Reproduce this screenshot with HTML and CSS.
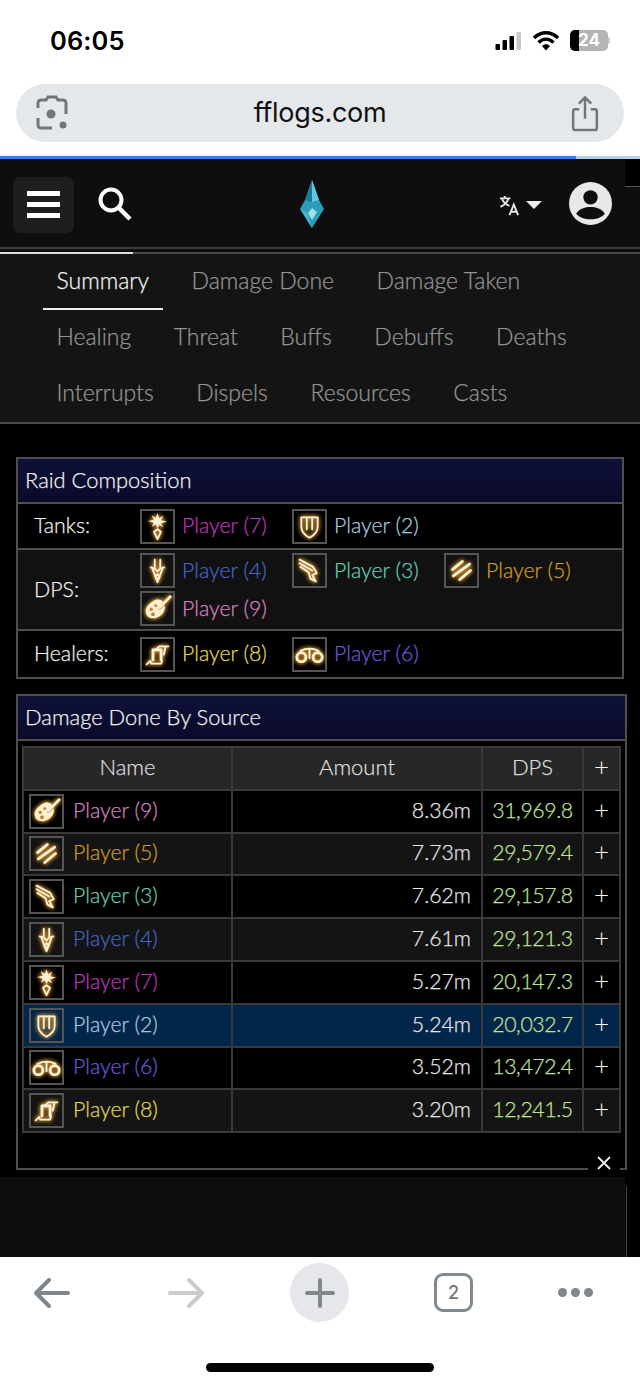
FILE: index.html
```html
<!DOCTYPE html>
<html lang="en">
<head>
<meta charset="utf-8">
<title>fflogs.com</title>
<link rel="stylesheet" href="styles.css">
</head>
<body>
<svg class="sprite" width="0" height="0" aria-hidden="true">
  <defs>
    <filter id="glow" x="-40%" y="-40%" width="180%" height="180%">
      <feGaussianBlur in="SourceAlpha" stdDeviation="2" result="b"/>
      <feFlood flood-color="#e09a2a"/>
      <feComposite in2="b" operator="in" result="c"/>
      <feMerge><feMergeNode in="c"/><feMergeNode in="c"/><feMergeNode in="SourceGraphic"/></feMerge>
    </filter>
    <symbol id="i-star" viewBox="0 0 32 32">
      <path class="gf" d="M16 1.500l1.800 5.500 4.700-3-2.700 5 6.700 1.500-6.700 1.800 2.700 4.700-4.700-3L16 18l-1.800-4.500-4.700 3 2.700-4.700-6.700-1.800 6.700-1.500-2.700-5 4.700 3z"/>
      <path class="gs" d="M16 19l3.800 2.800L16 30l-3.800-8.200z"/>
    </symbol>
    <symbol id="i-shield" viewBox="0 0 32 32">
      <path class="gs" d="M7 6h18v10.500c0 5-4.500 9.500-9 12-4.500-2.500-9-7-9-12z"/>
      <path class="gs" d="M13 6v13M19 6v13"/>
    </symbol>
    <symbol id="i-lance" viewBox="0 0 32 32">
      <path class="gs" d="M13 4v8M19 4v8M8.500 12.500l4.500 1.500 3 3 3-3 4.500-1.500"/>
      <path class="gs" d="M10.500 14l5.500 15 5.500-15M16 20l2.500 3-2.500 2.500-2.500-2.500z"/>
    </symbol>
    <symbol id="i-bow" viewBox="0 0 32 32">
      <path class="gs" d="M5 4l15 8M5 8l14 8M6 12l9 6"/>
      <path class="gs" d="M20 12l4 7-5 2 4 7-6-3-2-7"/>
    </symbol>
    <symbol id="i-stripes" viewBox="0 0 32 32">
      <path class="gs wide" d="M6 15L17 6M7 22L25 9M14 26L26 16"/>
    </symbol>
    <symbol id="i-palette" viewBox="0 0 32 32">
      <path class="gf" d="M11 8c4-3 10-2 11 1l-5 5-1 3 3 .5 5-5c1 6-3 12-10 14-7 1-11-2-11-8C3 14 7 11 11 8zm-2 7a2 2 0 1 0 .1 0zm5-4a1.800 1.800 0 1 0 .1 0zm-3 9a2.200 2.200 0 1 0 .1 0z" fill-rule="evenodd"/>
      <path class="gs wide" d="M18 15L30 3"/>
    </symbol>
    <symbol id="i-rune" viewBox="0 0 32 32">
      <path class="gs wide" d="M11 22V11h9v11"/>
      <path class="gs" d="M14 11l4-4h10M25 7l-2 9M4 27l4-4 1 3h11l1-3"/>
    </symbol>
    <symbol id="i-rings" viewBox="0 0 32 32">
      <path class="gs" d="M6 12c6-3 14-3 20 0M16 11v9"/>
      <circle class="gs wide" cx="7" cy="19" r="5"/>
      <circle class="gs wide" cx="25" cy="19" r="5"/>
    </symbol>
  </defs>
</svg>

<div class="status">
  <span class="clock">06:05</span>
  <div class="status-icons">
    <svg class="sig" viewBox="0 0 26 18"><rect x="0" y="12" width="4.500" height="6" rx="1"/><rect x="7" y="8" width="4.500" height="10" rx="1"/><rect x="14" y="4" width="4.500" height="14" rx="1"/><rect class="dim" x="21" y="0" width="4.500" height="18" rx="1"/></svg>
    <svg class="wifi" viewBox="0 0 26 20"><path d="M1 7c7-7 17-7 24 0M5.500 11.500c4.500-4.500 10.500-4.500 15 0" fill="none" stroke="#000" stroke-width="3.400"/><path d="M9 15c2.500-2.500 5.500-2.500 8 0l-4 4.500z"/></svg>
    <div class="batt"><span class="batt-fill"></span><span class="batt-num">24</span></div>
    <span class="batt-tip"></span>
  </div>
</div>

<div class="addr">
  <svg class="addr-ic" viewBox="0 0 32 36" fill="none" stroke="#70767b" stroke-width="3"><path d="M2 13V8a3 3 0 0 1 3-3h5l2-3h8l2 3h5a3 3 0 0 1 3 3v5"/><path d="M2 23v7a3 3 0 0 0 3 3h11M30 13v6"/><circle cx="15" cy="19" r="4.500" fill="#70767b" stroke="none"/><circle cx="27" cy="30" r="3.500" fill="#70767b" stroke="none"/></svg>
  <span class="url">fflogs.com</span>
  <svg class="addr-ic" viewBox="0 0 28 38" fill="none" stroke="#70767b" stroke-width="2.600"><path d="M8 14H3.500a2 2 0 0 0-2 2v18a2 2 0 0 0 2 2h21a2 2 0 0 0 2-2V16a2 2 0 0 0-2-2H20M14 24V2M7.500 8L14 1.500 20.500 8"/></svg>
</div>

<div class="progress"><span class="progress-done"></span></div>

<header class="site-head">
  <span class="hdr-corner"></span>
  <div class="burger"><span></span><span></span><span></span></div>
  <svg class="search" viewBox="0 0 34 34" fill="none" stroke="#fff"><circle cx="13" cy="13" r="10.500" stroke-width="4"/><path d="M20.500 20.500L32 32" stroke-width="4.500"/></svg>
  <svg class="crystal" viewBox="0 0 24 48"><path fill="#2b9dbb" d="M12 0l7 20 5 9-12 19L0 29l5-9z"/><path fill="#5fc8dc" d="M12 0v22l7-2z"/><path fill="#1a7a99" d="M12 0L5 20l7 2z"/><path fill="#9fe2ea" d="M12 28l5 4-5 8-4-7z"/><path fill="#42b4cd" d="M0 29l8 4 4 15z"/></svg>
  <div class="lang">
    <svg class="lang-ic" viewBox="0 0 22 22" fill="none" stroke="#e6e6e6" stroke-width="2"><path d="M1 3.500h11M6 1v2.500M3 3.500c1 3.500 4 6.500 8 8M10 3.500c-1 3.500-4 7-8.500 9M11 21l4.500-11 4.500 11M12.500 17.500h6"/></svg>
    <span class="caret"></span>
  </div>
  <svg class="avatar" viewBox="0 0 42 42"><circle cx="21" cy="21" r="21" fill="#e8e8e8"/><circle cx="21" cy="15" r="7" fill="#0e0e0e"/><path fill="#0e0e0e" d="M7 31c3-5 9-6.500 14-6.500S32 26 35 31c-3 3.500-8 5.500-14 5.500S10 34.500 7 31z"/></svg>
</header>
<div class="head-rule"><span class="head-rule-on"></span></div>

<nav class="tabs">
  <a class="tab active">Summary</a>
  <a class="tab">Damage Done</a>
  <a class="tab">Damage Taken</a>
  <a class="tab">Healing</a>
  <a class="tab">Threat</a>
  <a class="tab">Buffs</a>
  <a class="tab">Debuffs</a>
  <a class="tab">Deaths</a>
  <a class="tab">Interrupts</a>
  <a class="tab">Dispels</a>
  <a class="tab">Resources</a>
  <a class="tab">Casts</a>
</nav>

<main class="content">
  <section class="panel raid">
    <h2 class="panel-title">Raid Composition</h2>
    <div class="comp-row">
      <div class="comp-label">Tanks:</div>
      <div class="comp-list">
        <div class="member"><svg class="job"><use href="#i-star"/></svg><span class="c7">Player (7)</span></div>
        <div class="member"><svg class="job"><use href="#i-shield"/></svg><span class="c2">Player (2)</span></div>
      </div>
    </div>
    <div class="comp-row alt">
      <div class="comp-label">DPS:</div>
      <div class="comp-list">
        <div class="member"><svg class="job"><use href="#i-lance"/></svg><span class="c4">Player (4)</span></div>
        <div class="member"><svg class="job"><use href="#i-bow"/></svg><span class="c3">Player (3)</span></div>
        <div class="member"><svg class="job"><use href="#i-stripes"/></svg><span class="c5">Player (5)</span></div>
        <div class="member"><svg class="job"><use href="#i-palette"/></svg><span class="c9">Player (9)</span></div>
      </div>
    </div>
    <div class="comp-row">
      <div class="comp-label">Healers:</div>
      <div class="comp-list">
        <div class="member"><svg class="job"><use href="#i-rune"/></svg><span class="c8">Player (8)</span></div>
        <div class="member"><svg class="job"><use href="#i-rings"/></svg><span class="c6">Player (6)</span></div>
      </div>
    </div>
  </section>

  <section class="panel damage">
    <h2 class="panel-title">Damage Done By Source</h2>
    <table class="dmg">
      <colgroup><col class="col-name"><col class="col-amt"><col class="col-dps"><col class="col-add"></colgroup>
      <thead><tr><th>Name</th><th>Amount</th><th>DPS</th><th class="add">+</th></tr></thead>
      <tbody>
        <tr><td class="name"><div class="who"><svg class="job"><use href="#i-palette"/></svg><span class="c9">Player (9)</span></div></td><td class="amt">8.36m</td><td class="dps">31,969.8</td><td class="add">+</td></tr>
        <tr><td class="name"><div class="who"><svg class="job"><use href="#i-stripes"/></svg><span class="c5">Player (5)</span></div></td><td class="amt">7.73m</td><td class="dps">29,579.4</td><td class="add">+</td></tr>
        <tr><td class="name"><div class="who"><svg class="job"><use href="#i-bow"/></svg><span class="c3">Player (3)</span></div></td><td class="amt">7.62m</td><td class="dps">29,157.8</td><td class="add">+</td></tr>
        <tr><td class="name"><div class="who"><svg class="job"><use href="#i-lance"/></svg><span class="c4">Player (4)</span></div></td><td class="amt">7.61m</td><td class="dps">29,121.3</td><td class="add">+</td></tr>
        <tr><td class="name"><div class="who"><svg class="job"><use href="#i-star"/></svg><span class="c7">Player (7)</span></div></td><td class="amt">5.27m</td><td class="dps">20,147.3</td><td class="add">+</td></tr>
        <tr class="me"><td class="name"><div class="who"><svg class="job"><use href="#i-shield"/></svg><span class="c2">Player (2)</span></div></td><td class="amt">5.24m</td><td class="dps">20,032.7</td><td class="add">+</td></tr>
        <tr><td class="name"><div class="who"><svg class="job"><use href="#i-rings"/></svg><span class="c6">Player (6)</span></div></td><td class="amt">3.52m</td><td class="dps">13,472.4</td><td class="add">+</td></tr>
        <tr><td class="name"><div class="who"><svg class="job"><use href="#i-rune"/></svg><span class="c8">Player (8)</span></div></td><td class="amt">3.20m</td><td class="dps">12,241.5</td><td class="add">+</td></tr>
      </tbody>
    </table>
    <svg class="close" viewBox="0 0 32 14" fill="none" stroke="#eee" stroke-width="1.800"><path d="M10 1l12 12M22 1L10 13"/></svg>
  </section>
</main>

<div class="strip"><div class="strip-fill"></div><div class="strip-edge"></div></div>

<footer class="toolbar">
  <div class="tools">
    <svg class="arrow" viewBox="0 0 36 30" fill="none" stroke="#7f878c" stroke-width="4" stroke-linecap="round" stroke-linejoin="round"><path d="M34 15H3M15 2L2 15l13 13"/></svg>
    <svg class="arrow" viewBox="0 0 36 30" fill="none" stroke="#c9cbcc" stroke-width="4" stroke-linecap="round" stroke-linejoin="round"><path d="M2 15h31M21 2l13 13-13 13"/></svg>
    <div class="newtab"><svg viewBox="0 0 30 30" fill="none" stroke="#7f878c" stroke-width="4" stroke-linecap="round"><path d="M15 2v26M2 15h26"/></svg></div>
    <div class="tabcount">2</div>
    <div class="more"><span></span><span></span><span></span></div>
  </div>
  <div class="home"></div>
</footer>
</body>
</html>
```

FILE: styles.css
```css
* { box-sizing: border-box; }
html, body { margin: 0; padding: 0; }
body {
  width: 640px;
  height: 1385px;
  overflow: hidden;
  background: #000;
  color: #e8e8e8;
  font-family: Lato, "Open Sans", sans-serif;
  font-size: 21.300px;
  font-weight: 300;
  -webkit-text-stroke: .25px;
  display: flex;
  flex-direction: column;
}
.sprite { position: absolute; }

/* iOS status bar */
.status {
  height: 84px;
  background: #fff;
  color: #000;
  display: flex;
  align-items: flex-start;
  justify-content: space-between;
  padding: 26px 30px 0 50px;
  flex: none;
  -webkit-text-stroke: 0;
}
.clock { font: 600 25.500px/30px Inter, sans-serif; letter-spacing: .1px; }
.status-icons { display: flex; align-items: center; gap: 11px; padding-top: 4px; }
.sig { width: 27px; height: 18px; }
.sig .dim { fill: #c8c8c8; }
.wifi { width: 26px; height: 20px; }
.batt { position: relative; width: 38px; height: 21px; border-radius: 5px; background: #b5b5b5; overflow: hidden; }
.batt-fill { position: absolute; left: 0; top: 0; bottom: 0; width: 9px; background: #000; }
.batt-num { position: absolute; inset: 0; text-align: center; color: #fff; font: 700 17px/21px Inter, sans-serif; }
.batt-tip { width: 2px; height: 7px; margin-left: -11px; background: #c8c8c8; border-radius: 0 2px 2px 0; }

/* Address bar */
.addr {
  flex: none;
  position: relative;
  height: 72px;
  background: #fff;
  padding: 0 16px 14px;
  display: flex;
  -webkit-text-stroke: 0;
}
.url {
  position: absolute;
  left: 16px;
  right: 16px;
  top: 0;
  height: 58px;
  background: #e5e8eb;
  border-radius: 29px;
  text-align: center;
  font: 400 27px/58px Inter, "Liberation Sans", sans-serif;
  letter-spacing: -.3px;
  color: #111;
}
.addr-ic { position: relative; z-index: 1; width: 32px; height: 36px; margin-top: 11px; }
.addr-ic:first-child { margin-left: 20px; }
.addr-ic:last-child { margin-left: auto; margin-right: 25px; width: 28px; height: 36px; margin-top: 12px; }

.progress { flex: none; height: 3px; background: #b3d0ec; }
.progress-done { display: block; width: 576px; height: 3px; background: #2a86e0; }

/* Site header */
.site-head {
  flex: none;
  position: relative;
  height: 90px;
  background: #0e0e0e;
  display: flex;
  align-items: center;
  border-bottom: 2px solid #3c3c3c;
  padding: 0 28px 0 13px;
}
.hdr-corner {
  position: absolute;
  right: 0;
  top: 0;
  width: 15px;
  height: 28px;
  background: #000;
  border-bottom: 1px solid #555;
  box-shadow: 0 2px 0 #0e0e0e;
}
.burger {
  width: 61px;
  height: 56px;
  margin-top: 3px;
  background: #1e1e1e;
  border-radius: 7px;
  display: flex;
  flex-direction: column;
  justify-content: center;
  align-items: center;
  gap: 6.500px;
}
.burger span { display: block; width: 33px; height: 4.500px; background: #fff; }
.search { width: 34px; height: 34px; margin-left: 24px; margin-top: 2px; }
.crystal { width: 24px; height: 48px; margin-left: 168px; margin-top: 2px; }
.lang { display: flex; align-items: center; gap: 6px; margin-left: auto; }
.lang-ic { width: 21px; height: 21px; margin-top: 5px; }
.caret { width: 0; height: 0; border-left: 8px solid transparent; border-right: 8px solid transparent; border-top: 8px solid #eee; margin-top: 4px; }
.avatar { width: 43px; height: 43px; margin-left: 27px; margin-top: 0; }

.head-rule { flex: none; height: 5px; background: #0e0e0e; border-bottom: 2px solid #4a4a4a; position: relative; }
.head-rule-on { position: absolute; left: 0; top: 3px; width: 133px; height: 2px; background: #ddd; }

/* Tabs */
.tabs {
  flex: none;
  height: 170px;
  background: #141414;
  border-bottom: 2px solid #4c4c4c;
  padding: 0 43px;
  display: flex;
  flex-wrap: wrap;
  align-content: flex-start;
  gap: 0 15.500px;
}
.tab {
  height: 56px;
  padding: 0 13.500px;
  line-height: 52px;
  color: #949494;
  font-size: 23px;
  white-space: nowrap;
}
.tab.active { color: #f4f4f4; border-bottom: 2px solid #eee; }

/* Panels */
.content { flex: none; height: 753px; padding: 33px 0 0 16px; background: #000; }
.panel { border: 2px solid #4e4e4e; background: #000; }
.panel.raid { width: 608px; }
.panel.damage { position: relative; width: 611px; height: 476px; margin-top: 15px; }
.panel-title {
  margin: 0;
  height: 45px;
  padding-left: 7px;
  font-size: 21.900px;
  font-weight: 300;
  line-height: 42px;
  color: #f0f0f0;
  background: linear-gradient(#0e1038, #0a0b2a);
  border-bottom: 2px solid #4e4e4e;
}

.comp-row {
  display: flex;
  align-items: center;
  border-bottom: 2px solid #4e4e4e;
  min-height: 46px;
}
.comp-row:last-child { border-bottom: 0; }
.comp-row.alt { background: #111; }
.comp-label { width: 122px; padding-left: 16px; flex: none; color: #eee; margin-top: -2px; }
.comp-list { display: flex; flex-wrap: wrap; gap: 3px 0; padding: 3px 0; }
.member { width: 152px; display: flex; align-items: center; gap: 7px; white-space: nowrap; }
.member span { margin-top: -2px; }

.job {
  flex: none;
  width: 35px;
  height: 35px;
  border: 2px solid #555;
  padding: 1px;
  overflow: visible;
}
.job use { filter: url(#glow); }
.gf { fill: #fff2d2; stroke: none; }
.gs { fill: none; stroke: #fff2d2; stroke-width: 2; stroke-linejoin: round; stroke-linecap: round; }
.gs.wide { stroke-width: 3; }

.c2 { color: #a8cadf; }
.c3 { color: #66cbb4; }
.c4 { color: #4465c2; }
.c5 { color: #d09c20; }
.c6 { color: #7154dc; }
.c7 { color: #c233bd; }
.c8 { color: #e0d852; }
.c9 { color: #d682c2; }

/* Damage table */
.dmg {
  width: 597px;
  margin: 5px 0 0 4px;
  table-layout: fixed;
  border-collapse: collapse;
  border: 2px solid #3a3a3a;
}
.col-name { width: 209px; }
.col-amt { width: 250px; }
.col-dps { width: 101px; }
.col-add { width: 37px; }
.dmg th, .dmg td { height: 42.800px; padding: 0 0 3px; border: 2px solid #3a3a3a; font-weight: 300; }
.dmg th { background: #272727; color: #ddd; text-align: center; font-size: 22px; }
.dmg tbody tr:nth-child(even) td { background: #141414; }
.dmg tbody tr.me td { background: #02264a; }
.dmg td.name { padding-bottom: 0; }
.who { display: flex; align-items: center; gap: 9px; padding-left: 5px; }
.who span { margin-top: -3px; }
.who .job { width: 35px; height: 35px; }
.dmg td.amt { text-align: right; padding-right: 10px; color: #e6e6e6; }
.dps { text-align: center; color: #bfe292; letter-spacing: -.4px; }
.dmg .add { text-align: center; color: #fff; font-size: 26px; font-weight: 300; -webkit-text-stroke: 0; padding-bottom: 5px; }
.close {
  position: absolute;
  right: 5px;
  bottom: -2px;
  width: 32px;
  height: 14px;
  background: #000;
  overflow: visible;
}

.strip { flex: none; height: 80px; display: flex; background: #000; }
.strip-fill { width: 625px; background: #0e0e0e; }
.strip-edge { width: 1px; margin: 9px 0 0 1px; background: #444; }

/* Bottom toolbar */
.toolbar { flex: 1; background: #fff; -webkit-text-stroke: 0; }
.tools { height: 71px; display: flex; align-items: center; padding: 0 47px 0 34px; }
.arrow { width: 36px; height: 30px; }
.arrow + .arrow { margin-left: 98px; }
.newtab { width: 59px; height: 59px; margin-left: 86px; border-radius: 50%; background: #e5e7eb; display: flex; align-items: center; justify-content: center; }
.newtab svg { width: 30px; height: 30px; }
.tabcount {
  width: 39px;
  height: 39px;
  margin-left: 85px;
  border: 3px solid #7f8a8f;
  border-radius: 9px;
  color: #6f777c;
  font: 500 18px/33px Inter, sans-serif;
  text-align: center;
}
.more { display: flex; gap: 4px; margin-left: auto; }
.more span { width: 9px; height: 9px; border-radius: 50%; background: #7f878c; }
.home { width: 228px; height: 9px; margin: 35px 0 0 206px; border-radius: 5px; background: #000; }
```
